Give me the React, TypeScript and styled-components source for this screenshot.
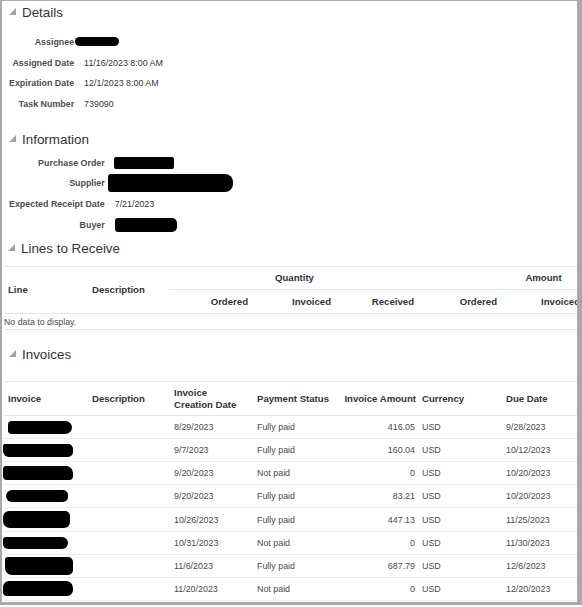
import React from 'react'
import styled, { createGlobalStyle } from 'styled-components'

const GlobalStyle = createGlobalStyle`
  html, body {
    margin: 0;
    padding: 0;
    background: #fff;
  }
  body {
    font-family: "Liberation Sans", Arial, sans-serif;
  }
`

const Frame = styled.div`
  width: 582px;
  height: 605px;
  box-sizing: border-box;
  border-style: solid;
  border-color: #a9a9a9;
  border-width: 1px 5px 3px 2px;
  overflow: hidden;
  background: #fff;
`

const SectionHeader = styled.div<{ $top: number; $indent?: number }>`
  display: flex;
  align-items: center;
  gap: 6px;
  height: 22px;
  margin-top: ${(p) => p.$top}px;
  padding-left: ${(p) => p.$indent ?? 7}px;
  font-size: 13.4px;
  color: #333;
  white-space: nowrap;
`

const Disclosure = styled.svg`
  width: 7px;
  height: 7px;
  flex: none;
  margin-top: -2px;
`

const Form = styled.div<{ $top: number }>`
  display: grid;
  grid-template-columns: max-content max-content;
  grid-auto-rows: 20.7px;
  column-gap: 10px;
  align-items: center;
  margin-top: ${(p) => p.$top}px;
  padding-left: 7px;
  font-size: 8.9px;
`

const Label = styled.div`
  text-align: right;
  font-weight: bold;
  color: #4d4d4d;
  white-space: nowrap;
`

const Value = styled.div`
  display: flex;
  align-items: center;
  color: #333;
  white-space: nowrap;
`

const Redacted = styled.span<{ $w: number; $h: number; $x?: number; $r?: string }>`
  display: inline-block;
  width: ${(p) => p.$w}px;
  height: ${(p) => p.$h}px;
  margin-left: ${(p) => p.$x ?? 0}px;
  border-radius: ${(p) => p.$r ?? '4px'};
  background: #000;
  vertical-align: middle;
`

const Table = styled.table<{ $top: number; $width: number }>`
  width: ${(p) => p.$width}px;
  margin-top: ${(p) => p.$top}px;
  margin-left: 2px;
  border-collapse: collapse;
  table-layout: fixed;
  border-top: 1px solid #e2e6ea;
`

const Th = styled.th<{ $align?: 'left' | 'right' | 'center'; $h?: number; $rule?: boolean }>`
  height: ${(p) => p.$h ?? 23}px;
  padding: 0 4px;
  box-sizing: border-box;
  font-size: 9.6px;
  line-height: 12px;
  font-weight: bold;
  color: #333;
  text-align: ${(p) => p.$align ?? 'left'};
  vertical-align: middle;
  border-bottom: ${(p) => (p.$rule ? '1px solid #e2e6ea' : 'none')};
`

const NumTh = styled(Th)`
  padding-right: 5px;
  white-space: nowrap;
`

const AmountTh = styled(NumTh)`
  padding-right: 2px;
`

const Td = styled.td<{ $align?: 'left' | 'right' }>`
  height: 23.1px;
  padding: 0 ${(p) => (p.$align === 'right' ? '3px' : '4px')} 0 4px;
  box-sizing: border-box;
  font-size: 8.9px;
  color: #4a4a4a;
  text-align: ${(p) => p.$align ?? 'left'};
  vertical-align: middle;
  border-bottom: 1px solid #eceff2;
  white-space: nowrap;
`

const EmptyCell = styled.td`
  height: 15px;
  padding: 0;
  font-size: 8.8px;
  color: #4a4a4a;
  vertical-align: middle;
  border-bottom: 1px solid #e2e6ea;
  white-space: nowrap;
`

const HeaderRow = styled.tr`
  border-bottom: 1px solid #e2e6ea;
`

const Triangle = () => (
  <Disclosure viewBox="0 0 7 7">
    <polygon points="7,0 7,7 0,7" fill="#a3a3a3" />
  </Disclosure>
)

const invoices = [
  { blob: { w: 64, h: 13, x: 0, r: '4px 7px 7px 4px' }, created: '8/29/2023', status: 'Fully paid', amount: '416.05', due: '9/28/2023' },
  { blob: { w: 70, h: 13, x: -5, r: '2px 5px 5px 6px' }, created: '9/7/2023', status: 'Fully paid', amount: '160.04', due: '10/12/2023' },
  { blob: { w: 70, h: 14, x: -5, r: '3px 7px 4px 4px' }, created: '9/20/2023', status: 'Not paid', amount: '0', due: '10/20/2023' },
  { blob: { w: 62, h: 12, x: -2, r: '6px 5px 5px 6px' }, created: '9/20/2023', status: 'Fully paid', amount: '83.21', due: '10/20/2023' },
  { blob: { w: 67, h: 17, x: -5, r: '6px 5px 6px 7px' }, created: '10/26/2023', status: 'Fully paid', amount: '447.13', due: '11/25/2023' },
  { blob: { w: 65, h: 12, x: -5, r: '3px 6px 6px 5px' }, created: '10/31/2023', status: 'Not paid', amount: '0', due: '11/30/2023' },
  { blob: { w: 68, h: 18, x: -3, r: '3px 5px 5px 7px' }, created: '11/6/2023', status: 'Fully paid', amount: '687.79', due: '12/6/2023' },
  { blob: { w: 70, h: 15, x: -5, r: '6px 7px 6px 4px' }, created: '11/20/2023', status: 'Not paid', amount: '0', due: '12/20/2023' },
]

const lineCols = [84, 82, 83, 83, 83, 83, 83, 83]
const invoiceCols = [84, 82, 83, 85, 80, 84, 84]

const App = () => (
  <>
    <GlobalStyle />
    <Frame>
      <SectionHeader $top={0}>
        <Triangle />
        Details
      </SectionHeader>
      <Form $top={8.5}>
        <Label>Assignee</Label>
        <Value>
          <Redacted $w={44} $h={9} $x={-9} $r="5px" />
        </Value>
        <Label>Assigned Date</Label>
        <Value>11/16/2023 8:00 AM</Value>
        <Label>Expiration Date</Label>
        <Value>12/1/2023 8:00 AM</Value>
        <Label>Task Number</Label>
        <Value>739090</Value>
      </Form>

      <SectionHeader $top={14.7}>
        <Triangle />
        Information
      </SectionHeader>
      <Form $top={1.4}>
        <Label>Purchase Order</Label>
        <Value>
          <Redacted $w={60} $h={12} $x={-1} $r="2px" />
        </Value>
        <Label>Supplier</Label>
        <Value>
          <Redacted $w={125} $h={18} $x={-7} $r="3px 8px 8px 3px" />
        </Value>
        <Label>Expected Receipt Date</Label>
        <Value>7/21/2023</Value>
        <Label>Buyer</Label>
        <Value>
          <Redacted $w={62} $h={14} $r="3px 5px 5px 3px" />
        </Value>
      </Form>

      <SectionHeader $top={2.5} $indent={6}>
        <Triangle />
        Lines to Receive
      </SectionHeader>
      <Table $top={6.5} $width={664}>
        <colgroup>
          {lineCols.map((w, i) => (
            <col key={i} style={{ width: w }} />
          ))}
        </colgroup>
        <thead>
          <tr>
            <Th rowSpan={2} $h={47}>Line</Th>
            <Th rowSpan={2} $h={47}>Description</Th>
            <Th colSpan={3} $align="center" $rule>Quantity</Th>
            <Th colSpan={3} $align="center" $rule>Amount</Th>
          </tr>
          <HeaderRow>
            <NumTh $align="right" $h={24}>Ordered</NumTh>
            <NumTh $align="right" $h={24}>Invoiced</NumTh>
            <NumTh $align="right" $h={24}>Received</NumTh>
            <NumTh $align="right" $h={24}>Ordered</NumTh>
            <NumTh $align="right" $h={24}>Invoiced</NumTh>
            <NumTh $align="right" $h={24}>Received</NumTh>
          </HeaderRow>
        </thead>
        <tbody>
          <tr>
            <EmptyCell colSpan={8}>No data to display.</EmptyCell>
          </tr>
        </tbody>
      </Table>

      <SectionHeader $top={13}>
        <Triangle />
        Invoices
      </SectionHeader>
      <Table $top={16} $width={582}>
        <colgroup>
          {invoiceCols.map((w, i) => (
            <col key={i} style={{ width: w }} />
          ))}
        </colgroup>
        <thead>
          <HeaderRow>
            <Th $h={34}>Invoice</Th>
            <Th $h={34}>Description</Th>
            <Th $h={34}>
              Invoice
              <br />
              Creation Date
            </Th>
            <Th $h={34}>Payment Status</Th>
            <AmountTh $h={34} $align="right">Invoice Amount</AmountTh>
            <Th $h={34}>Currency</Th>
            <Th $h={34}>Due Date</Th>
          </HeaderRow>
        </thead>
        <tbody>
          {invoices.map((row, i) => (
            <tr key={i}>
              <Td>
                <Redacted $w={row.blob.w} $h={row.blob.h} $x={row.blob.x} $r={row.blob.r} />
              </Td>
              <Td />
              <Td>{row.created}</Td>
              <Td>{row.status}</Td>
              <Td $align="right">{row.amount}</Td>
              <Td>USD</Td>
              <Td>{row.due}</Td>
            </tr>
          ))}
        </tbody>
      </Table>
    </Frame>
  </>
)

export default App
